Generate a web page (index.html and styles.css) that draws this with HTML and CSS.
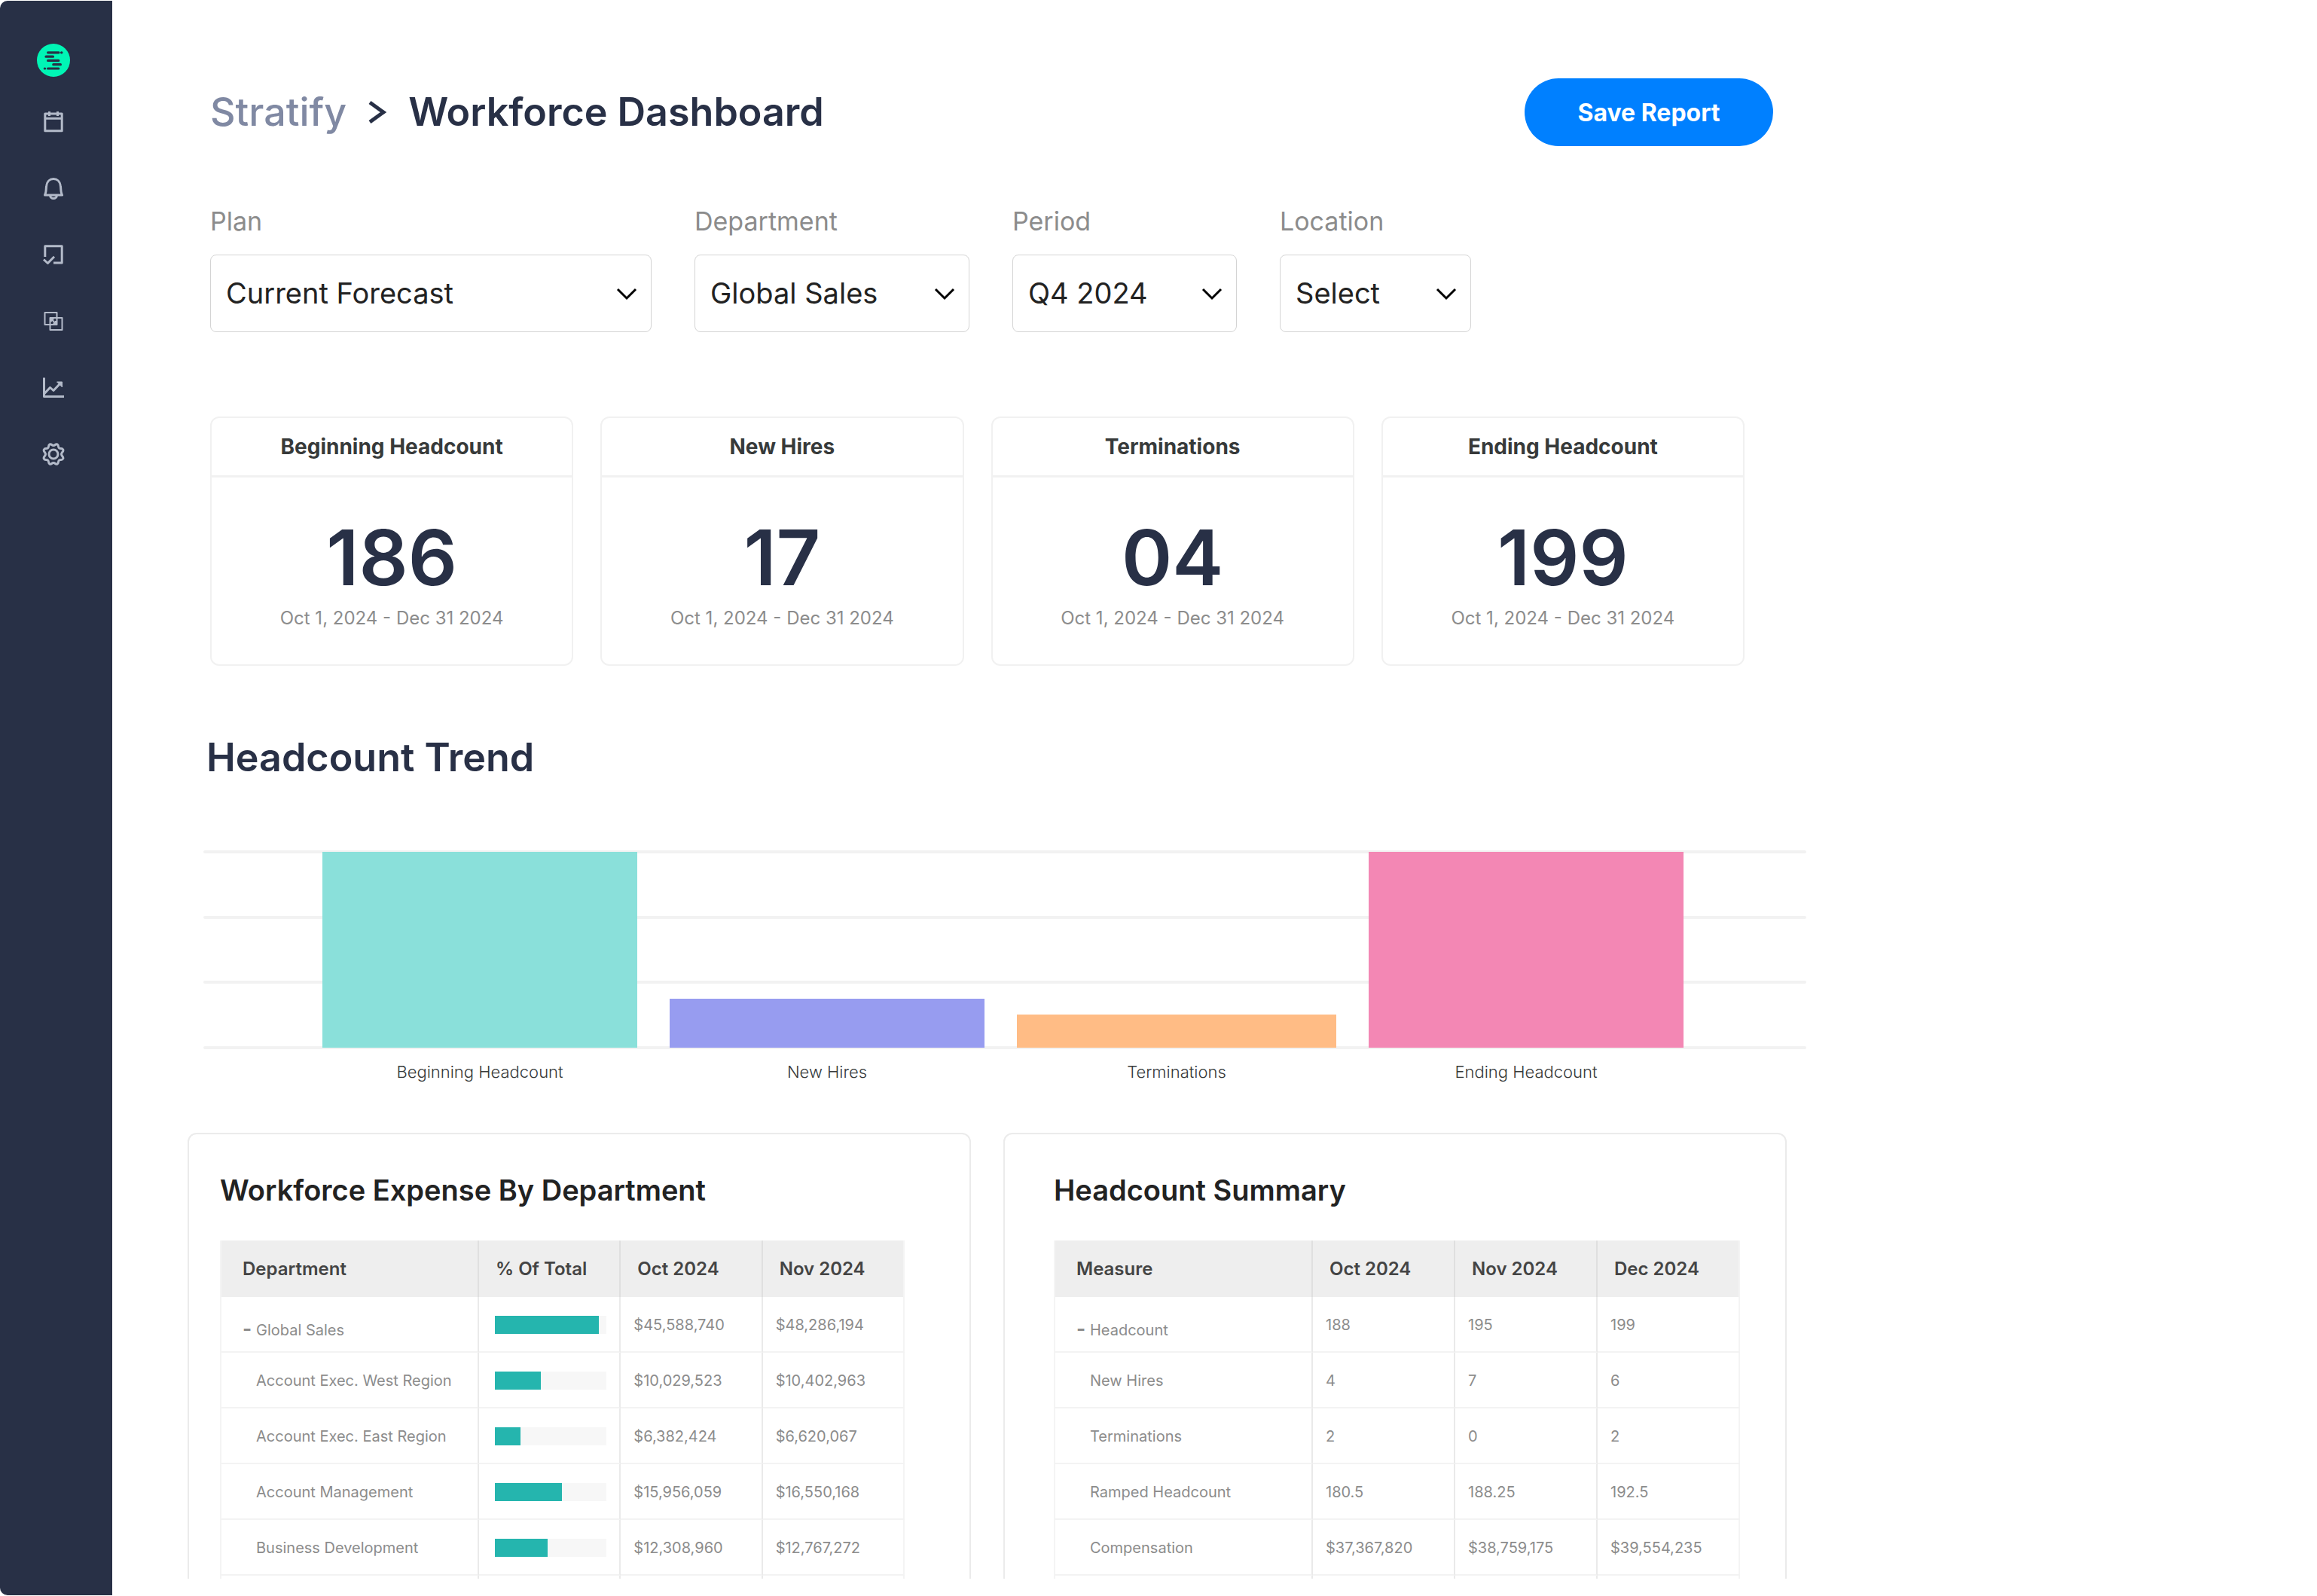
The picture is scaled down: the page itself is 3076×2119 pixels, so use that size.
FILE: index.html
```html
<!DOCTYPE html>
<html lang="en">
<head>
  <meta charset="UTF-8">
  <title>Stratify | Workforce Dashboard</title>
  <link rel="stylesheet" href="styles.css">
</head>
<body>
  <nav class="sidebar">
    <a href="#" class="logo" aria-label="Stratify">
      <svg width="44" height="44" viewBox="0 0 44 44" fill="none" stroke="#283046" stroke-width="3.2" stroke-linecap="round">
        <circle cx="22" cy="22" r="22" fill="#00f5b5" stroke="none"/>
        <path d="M14.6 11.8H29M32.6 11.8h.3M12 17.2H21.5M14.6 22.4H28.8M21.8 27.7H31.4M10.3 33h.3M14.6 33H28.8"/>
      </svg>
    </a>
    <a href="#" class="nav-item" aria-label="Calendar">
      <svg width="32" height="32" viewBox="0 0 32 32"><path d="M4.8 5h22.4v22.8H4.8zM4.8 11.3h22.4M10.5 2v6M21.5 2v6"/></svg>
    </a>
    <a href="#" class="nav-item" aria-label="Notifications">
      <svg width="32" height="32" viewBox="0 0 32 32"><path d="M4.5 25C6.5 21.5 6 17.5 6.6 13C7.2 7 11 3.5 16 3.5S24.8 7 25.4 13C26 17.5 25.5 21.5 27.5 25zM11.5 25c0 6 9 6 9 0"/></svg>
    </a>
    <a href="#" class="nav-item" aria-label="Tasks">
      <svg width="32" height="32" viewBox="0 0 32 32"><path d="M4.8 19V4.8H27.2V27H16M3 22.5l5.4 5L17 18.8"/></svg>
    </a>
    <a href="#" class="nav-item" aria-label="Scenarios">
      <svg width="32" height="32" viewBox="0 0 32 32" class="thin"><path d="M4.5 5H20.5V21H4.5zM11.5 12H27.5V28H11.5zM13 13.5l5 5M13 17v-3.5h3.5M19 16v3.5h-3.5"/></svg>
    </a>
    <a href="#" class="nav-item" aria-label="Reports">
      <svg width="32" height="32" viewBox="0 0 32 32"><path d="M3.5 3.5V28.5H30M4 24.5l7.5-8 4.5 4L26 10"/><path class="solid" d="M20.5 9h7v7z"/></svg>
    </a>
    <a href="#" class="nav-item" aria-label="Settings">
      <svg width="32" height="32" viewBox="0 0 32 32"><circle cx="16" cy="17" r="6"/><path d="M16 5.5C18.5 5.5 18.5 3 21 4S21.5 8 23.8 9.2C26 10 27.5 8.5 28.7 11S26.5 14.5 26.5 17C26.5 19.5 29.8 20.5 28.7 23S26 24 23.8 24.8C21.5 26 23.5 29 21 30S18.5 28.5 16 28.5C13.5 28.5 13.5 31 11 30S10.5 26 8.2 24.8C6 24 4.5 25.5 3.3 23S5.5 19.5 5.5 17C5.5 14.5 2.2 13.5 3.3 11S6 10 8.2 9.2C10.5 8 8.5 5 11 4S13.5 5.5 16 5.5z"/></svg>
    </a>
  </nav>

  <main class="main">
    <header class="header">
      <h1 class="breadcrumb">
        <a href="#">Stratify</a>
        <svg width="26" height="32" viewBox="0 0 26 32"><path d="M3 3l18 13L3 29"/></svg>
        <span>Workforce Dashboard</span>
      </h1>
      <button class="save-button">Save Report</button>
    </header>

    <form class="filters">
      <div class="filter filter-plan">
        <label for="plan">Plan</label>
        <div class="select-box">
          <select id="plan"><option>Current Forecast</option></select>
          <svg width="30" height="18" viewBox="0 0 30 18"><path d="M3 3l12 12L27 3"/></svg>
        </div>
      </div>
      <div class="filter filter-department">
        <label for="department">Department</label>
        <div class="select-box">
          <select id="department"><option>Global Sales</option></select>
          <svg width="30" height="18" viewBox="0 0 30 18"><path d="M3 3l12 12L27 3"/></svg>
        </div>
      </div>
      <div class="filter filter-period">
        <label for="period">Period</label>
        <div class="select-box">
          <select id="period"><option>Q4 2024</option></select>
          <svg width="30" height="18" viewBox="0 0 30 18"><path d="M3 3l12 12L27 3"/></svg>
        </div>
      </div>
      <div class="filter filter-location">
        <label for="location">Location</label>
        <div class="select-box">
          <select id="location"><option>Select</option></select>
          <svg width="30" height="18" viewBox="0 0 30 18"><path d="M3 3l12 12L27 3"/></svg>
        </div>
      </div>
    </form>

    <section class="cards">
      <div class="card">
        <h3>Beginning Headcount</h3>
        <div class="card-value">186</div>
        <p>Oct 1, 2024 - Dec 31 2024</p>
      </div>
      <div class="card">
        <h3>New Hires</h3>
        <div class="card-value">17</div>
        <p>Oct 1, 2024 - Dec 31 2024</p>
      </div>
      <div class="card">
        <h3>Terminations</h3>
        <div class="card-value">04</div>
        <p>Oct 1, 2024 - Dec 31 2024</p>
      </div>
      <div class="card">
        <h3>Ending Headcount</h3>
        <div class="card-value">199</div>
        <p>Oct 1, 2024 - Dec 31 2024</p>
      </div>
    </section>

    <h2 class="trend-title">Headcount Trend</h2>
    <section class="chart">
      <div class="plot">
        <div class="grid-lines"><i></i><i></i><i></i><i></i></div>
        <div class="bars">
          <div class="bar teal" style="height: 100%"></div>
          <div class="bar purple" style="height: 25%"></div>
          <div class="bar orange" style="height: 17%"></div>
          <div class="bar pink" style="height: 100%"></div>
        </div>
      </div>
      <div class="chart-labels">
        <span>Beginning Headcount</span>
        <span>New Hires</span>
        <span>Terminations</span>
        <span>Ending Headcount</span>
      </div>
    </section>

    <section class="panels">
      <div class="panel">
        <h2>Workforce Expense By Department</h2>
        <table>
          <thead>
            <tr><th>Department</th><th>% Of Total</th><th>Oct 2024</th><th>Nov 2024</th></tr>
          </thead>
          <tbody>
            <tr class="parent"><td><b>-</b>Global Sales</td><td><div class="meter"><div style="width: 93%"></div></div></td><td>$45,588,740</td><td>$48,286,194</td></tr>
            <tr><td>Account Exec. West Region</td><td><div class="meter"><div style="width: 41%"></div></div></td><td>$10,029,523</td><td>$10,402,963</td></tr>
            <tr><td>Account Exec. East Region</td><td><div class="meter"><div style="width: 23%"></div></div></td><td>$6,382,424</td><td>$6,620,067</td></tr>
            <tr><td>Account Management</td><td><div class="meter"><div style="width: 60%"></div></div></td><td>$15,956,059</td><td>$16,550,168</td></tr>
            <tr><td>Business Development</td><td><div class="meter"><div style="width: 47%"></div></div></td><td>$12,308,960</td><td>$12,767,272</td></tr>
            <tr><td></td><td></td><td></td><td></td></tr>
          </tbody>
        </table>
      </div>
      <div class="panel panel-summary">
        <h2>Headcount Summary</h2>
        <table>
          <thead>
            <tr><th>Measure</th><th>Oct 2024</th><th>Nov 2024</th><th>Dec 2024</th></tr>
          </thead>
          <tbody>
            <tr class="parent"><td><b>-</b>Headcount</td><td>188</td><td>195</td><td>199</td></tr>
            <tr><td>New Hires</td><td>4</td><td>7</td><td>6</td></tr>
            <tr><td>Terminations</td><td>2</td><td>0</td><td>2</td></tr>
            <tr><td>Ramped Headcount</td><td>180.5</td><td>188.25</td><td>192.5</td></tr>
            <tr><td>Compensation</td><td>$37,367,820</td><td>$38,759,175</td><td>$39,554,235</td></tr>
            <tr><td></td><td></td><td></td><td></td></tr>
          </tbody>
        </table>
      </div>
    </section>
  </main>
</body>
</html>
```
FILE: styles.css
```css
* {
  box-sizing: border-box;
}
body {
  margin: 0;
  height: 100vh;
  display: flex;
  overflow: hidden;
  background-color: #fff;
  color: #283046;
  font-family: Inter, "Liberation Sans", sans-serif;
}
h1, h2, h3, p {
  margin: 0;
}

/* Sidebar */
.sidebar {
  flex: none;
  width: 149px;
  margin: 1px 0;
  padding: 57px 7px 0 0;
  display: flex;
  flex-direction: column;
  align-items: center;
  background-color: #283046;
  border-radius: 10px 0 0 10px;
}
.logo {
  height: 60px;
}
.logo svg, .nav-item svg {
  display: block;
}
.nav-item {
  height: 88px;
  display: flex;
  align-items: center;
}
.nav-item svg {
  fill: none;
  stroke: #b3bac9;
  stroke-width: 3;
  stroke-linejoin: round;
}
.nav-item svg.thin {
  stroke-width: 2;
}
.nav-item .solid {
  fill: #b3bac9;
  stroke-width: 1;
}

.main {
  flex: 1;
  max-width: 2249px;
  margin-bottom: 23px;
  padding-top: 104px;
  overflow: hidden;
}

/* Header */
.header {
  display: flex;
  align-items: center;
  justify-content: space-between;
  margin: 0 44px 80px 130px;
}
.breadcrumb {
  display: flex;
  align-items: center;
  gap: 28px;
  font-size: 52px;
  line-height: 66px;
  font-weight: 600;
}
.breadcrumb a {
  color: #8089a3;
  font-weight: 500;
  text-decoration: none;
}
.breadcrumb svg {
  fill: none;
  stroke: #283046;
  stroke-width: 5;
}
.save-button {
  width: 330px;
  height: 90px;
  border: none;
  border-radius: 45px;
  background-color: #0080ff;
  color: #fff;
  font: 700 32px Inter, sans-serif;
  cursor: pointer;
}

/* Filters */
.filters {
  display: flex;
  gap: 57px;
  margin: 0 0 112px 130px;
}
.filter label {
  display: block;
  margin-bottom: 24px;
  font-size: 34px;
  line-height: 40px;
  font-weight: 400;
  color: #8c8c8c;
}
.filter-plan {
  width: 586px;
}
.filter-department {
  width: 365px;
}
.filter-period {
  width: 298px;
}
.filter-location {
  width: 254px;
}
.select-box {
  position: relative;
}
.select-box select {
  display: block;
  width: 100%;
  height: 103px;
  padding: 0 20px 2px;
  appearance: none;
  border: 1px solid #d4d4d4;
  border-radius: 8px;
  background-color: #fff;
  color: #222;
  font: 400 38px Inter, sans-serif;
}
.select-box svg {
  position: absolute;
  right: 18px;
  top: 43px;
  fill: none;
  stroke: #000;
  stroke-width: 3;
  pointer-events: none;
}

/* Cards */
.cards {
  display: grid;
  grid-template-columns: repeat(4, 1fr);
  gap: 36px;
  margin: 0 82px 89px 130px;
}
.card {
  border: 2px solid #f1f1f1;
  border-radius: 12px;
  padding-bottom: 36px;
  text-align: center;
}
.card h3 {
  border-bottom: 3px solid #f1f1f1;
  font-size: 28px;
  line-height: 76px;
  font-weight: 700;
  color: #373a3a;
}
.card-value {
  margin-top: 50px;
  font-size: 102px;
  line-height: 112px;
  font-weight: 600;
}
.card p {
  font-size: 24px;
  line-height: 50px;
  color: #8c8c8c;
}

/* Chart */
.trend-title {
  margin: 0 0 90px 125px;
  font-size: 52px;
  line-height: 66px;
  font-weight: 600;
}
.chart {
  margin: 0 0 67px 121px;
}
.plot {
  display: grid;
  height: 264px;
  margin-bottom: 16px;
}
.grid-lines, .bars {
  grid-area: 1 / 1;
}
.grid-lines {
  display: flex;
  flex-direction: column;
  justify-content: space-between;
}
.grid-lines i {
  height: 4px;
  border-radius: 2px;
  background-color: #f2f2f2;
}
.bars, .chart-labels {
  display: grid;
  grid-template-columns: 418fr 418fr 424fr 418fr;
  gap: 43px;
  padding: 2px 163px 2px 158px;
}
.bars {
  height: 264px;
  align-items: end;
}
.chart-labels {
  padding-top: 0;
  padding-bottom: 0;
  text-align: center;
  font-size: 22px;
  line-height: 28px;
  font-weight: 350;
  color: #373a3a;
}
.teal {
  background-color: #8ae0da;
}
.purple {
  background-color: #979cf0;
}
.orange {
  background-color: #ffbc85;
}
.pink {
  background-color: #f387b4;
}

/* Tables */
.panels {
  display: grid;
  grid-template-columns: 1fr 1fr;
  gap: 43px;
  margin: 0 26px 0 100px;
}
.panel {
  border: 2px solid #ebebeb;
  border-radius: 12px;
  padding: 50px 86px 0 41px;
}
.panel-summary {
  padding-left: 65px;
  padding-right: 60px;
}
.panel h2 {
  margin-bottom: 43px;
  font-size: 38px;
  line-height: 48px;
  font-weight: 600;
  color: #222;
}
table {
  width: 100%;
  table-layout: fixed;
  border-spacing: 0;
  border-left: 2px solid #f4f4f4;
}
th, td {
  padding: 0 17px;
  text-align: left;
  border-right: 2px solid #eaeaea;
}
th:last-child, td:last-child {
  border-right-color: #f4f4f4;
}
th:first-child {
  width: 342px;
  padding-left: 28px;
}
th {
  height: 75px;
  padding-left: 22px;
  background-color: #eee;
  border-right-color: #dfdfdf;
  font-size: 24px;
  font-weight: 600;
  color: #444;
}
td {
  height: 74px;
  padding-top: 2px;
  border-bottom: 2px solid #f3f3f3;
  font-size: 20px;
  color: #8c8c8c;
}
td:first-child {
  padding-left: 46px;
}
.parent td:first-child {
  padding: 16px 0 0 28px;
}
.parent b {
  display: inline-block;
  width: 18px;
  font-size: 26px;
  line-height: 20px;
}
.meter {
  height: 24px;
  margin-left: 4px;
  background-color: #f7f7f7;
}
.meter div {
  height: 100%;
  background-color: #25b5ae;
}
```
